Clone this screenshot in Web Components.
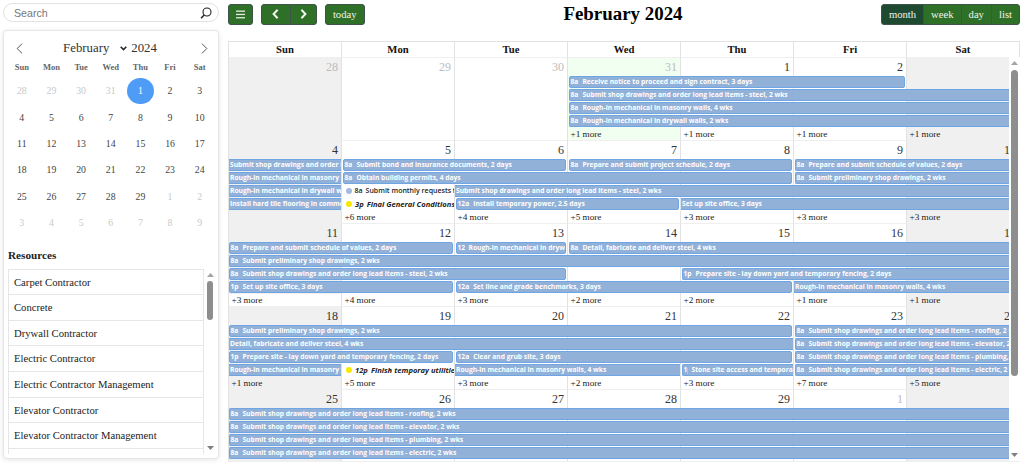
<!DOCTYPE html>
<html lang="en"><head><meta charset="utf-8"><title>February 2024</title>
<style>
html,body{margin:0;padding:0;height:465px;overflow:hidden;background:#fff;font-family:"Liberation Serif",serif;color:#222}
</style></head><body>
<app-layout>
  <side-bar slot="side">
    <search-box></search-box>
    <side-card>
      <mini-cal></mini-cal>
      <resource-list></resource-list>
    </side-card>
  </side-bar>
  <main-pane slot="main">
    <cal-toolbar title-text="February 2024"></cal-toolbar>
    <month-view></month-view>
  </main-pane>
</app-layout>
<script>
class Base extends HTMLElement{
  constructor(){super();this.attachShadow({mode:'open'});}
}
customElements.define('fake-scrollbar',class extends Base{
  connectedCallback(){
    const w=this.getAttribute('thumb-width'),t=this.getAttribute('thumb-top'),h=this.getAttribute('thumb-height');
    this.shadowRoot.innerHTML=`<style>
    :host{display:flex;flex-direction:column;align-items:center;position:absolute;top:0;right:0;bottom:0;width:${this.getAttribute('bar-width')}px;background:#fff;z-index:5}
    .a{flex:none;height:12px;display:flex;align-items:center;justify-content:center}
    .tr{flex:1;width:100%;display:flex;justify-content:center;align-items:flex-start}
    .th{width:${w}px;height:${h}px;margin-top:${t}px;border-radius:3.5px;background:#8e8e8e}
    svg{display:block}
    </style>
    <div class="a"><svg width="7" height="4"><path d="M3.5 0L7 4H0z" fill="#a4a4a4"/></svg></div>
    <div class="tr"><div class="th"></div></div>
    <div class="a"><svg width="7" height="4"><path d="M0 0H7L3.5 4z" fill="#808080"/></svg></div>`;
  }
});
customElements.define('app-layout',class extends Base{
  connectedCallback(){this.shadowRoot.innerHTML=`<style>
  :host{display:flex;height:465px;width:1024px;overflow:hidden}
  </style><slot name="side"></slot><slot name="main"></slot>`;}
});
customElements.define('side-bar',class extends Base{
  connectedCallback(){this.shadowRoot.innerHTML=`<style>
  :host{display:flex;flex-direction:column;flex:0 0 228px;width:228px;min-width:0;box-sizing:border-box;padding:3px 9px 0 3px;gap:8px}
  </style><slot></slot>`;}
});
customElements.define('search-box',class extends Base{
  connectedCallback(){this.shadowRoot.innerHTML=`<style>
  :host{display:flex;align-items:center;justify-content:space-between;height:19px;box-sizing:border-box;border:1px solid #e2e2e2;border-radius:10px;padding:0 6px 0 10px;font:10.67px "Liberation Sans",sans-serif;color:#777}
  svg{display:block}
  </style><span>Search</span>
  <svg width="12" height="12" viewBox="0 0 12 12" fill="none" stroke="#222" stroke-width="1.1"><circle cx="7" cy="5" r="4"/><path d="M4.2 8L1 11.2" stroke-width="1.5"/></svg>`;}
});
customElements.define('side-card',class extends Base{
  connectedCallback(){this.shadowRoot.innerHTML=`<style>
  :host{display:block;box-sizing:border-box;height:429px;border:1px solid #e6e6e6;border-radius:4px;box-shadow:0 1px 5px rgba(0,0,0,.1);padding:0 3px 0 3px;background:#fff}
  </style><slot></slot>`;}
});
customElements.define('mini-cal',class extends Base{
  connectedCallback(){
    const heads=['Sun','Mon','Tue','Wed','Thu','Fri','Sat'];
    const days=[];
    [28,29,30,31].forEach(d=>days.push([d,1]));
    for(let d=1;d<=29;d++)days.push([d,0]);
    for(let d=1;d<=9;d++)days.push([d,1]);
    this.shadowRoot.innerHTML=`<style>
    :host{display:block;font-family:"Liberation Serif",serif;color:#333}
    .hd{display:flex;align-items:center;justify-content:space-between;height:29px;padding:6px 7px 0 9px;box-sizing:border-box}
    .ttl{display:flex;align-items:center;font-size:12.8px;color:#333;margin-right:4px}
    .ttl svg{margin:0 4px 0 11px}
    .grid{display:grid;grid-template-columns:repeat(7,29.65px)}
    .w{font:bold 8.5px "Liberation Serif",serif;color:#666;text-align:center;height:9.5px;line-height:9.5px}
    .wk{margin-top:3px}
    .d{height:26.3px;display:flex;align-items:center;justify-content:center;font-size:9.8px;color:#444}
    .o{color:#c9c9c9}
    .t{position:relative;color:#fff}
    .t i{position:absolute;left:1.6px;top:0;width:26.4px;height:26.4px;border-radius:50%;background:#4f9cf6}
    .t b{position:relative;font-weight:normal}
    .first{margin-top:5.35px}
    svg{display:block}
    </style>
    <div class="hd">
      <svg width="7" height="11" viewBox="0 0 7 11" fill="none" stroke="#555" stroke-width="1"><path d="M6 .7L1.2 5.5 6 10.3"/></svg>
      <div class="ttl"><span>February</span><svg width="7" height="5" viewBox="0 0 7 5" fill="none" stroke="#222" stroke-width="1.5"><path d="M.7 .8L3.5 3.6 6.3 .8"/></svg><span>2024</span></div>
      <svg width="7" height="11" viewBox="0 0 7 11" fill="none" stroke="#555" stroke-width="1"><path d="M1 .7L5.8 5.5 1 10.3"/></svg>
    </div>
    <div class="grid wk">${heads.map(h=>`<div class="w">${h}</div>`).join('')}</div>
    <div class="grid first">${days.map(([d,o],i)=>i===4?`<div class="d t"><i></i><b>1</b></div>`:`<div class="d${o?' o':''}">${d}</div>`).join('')}</div>`;
  }
});
customElements.define('resource-list',class extends Base{
  connectedCallback(){
    const items=['Carpet Contractor','Concrete','Drywall Contractor','Electric Contractor','Electric Contractor Management','Elevator Contractor','Elevator Contractor Management','Excavation Contractor','Excavation Contractor Management','Fire Protection','Flooring Contractor','Framing Contractor','General Conditions','General Contractor','Glazing Contractor','HVAC Contractor','HVAC Contractor Management','Insulation Contractor','Landscaping','Masonry Contractor','Mechanical Contractor','Painting Contractor','Paving Contractor','Plumbing Contractor','Plumbing Contractor Management','Roofing Contractor','Site Utilities','Steel Contractor','Tile Contractor','Waterproofing'];
    this.shadowRoot.innerHTML=`<style>
    :host{display:block;font-family:"Liberation Serif",serif}
    h3{font:bold 11.2px/14px "Liberation Serif",serif;margin:12px 0 7.5px 1px;color:#222;height:14px}
    .wrap{position:relative;height:185px;width:208.5px;margin-left:.5px;overflow:hidden}
    .l{width:196.5px}
    .i{box-sizing:border-box;height:25.7px;line-height:24px;border:1px solid #e6e6e6;border-top:0;padding-left:5.5px;font-size:10.67px;color:#222;white-space:nowrap}
    .i:first-child{border-top:1px solid #e6e6e6}
    </style><h3>Resources</h3><div class="wrap"><div class="l">${items.map(t=>`<div class="i">${t}</div>`).join('')}</div>
    <fake-scrollbar bar-width="12" thumb-width="6" thumb-top="0" thumb-height="38.5"></fake-scrollbar></div>`;
  }
});
customElements.define('main-pane',class extends Base{
  connectedCallback(){this.shadowRoot.innerHTML=`<style>:host{display:block;flex:0 0 792px;width:792px}</style><slot></slot>`;}
});
customElements.define('cal-toolbar',class extends Base{
  connectedCallback(){
    const t=this.getAttribute('title-text');
    this.shadowRoot.innerHTML=`<style>
    :host{display:grid;grid-template-columns:1fr auto 1fr;align-items:center;height:41px;box-sizing:border-box;padding-bottom:16.5px;padding-top:4px;font-family:"Liberation Serif",serif}
    .l{display:flex;gap:8px}.r{display:flex;justify-content:flex-end}
    h1{font:bold 18.9px/20px "Liberation Serif",serif;margin:0 2px 0 0;color:#000}
    .g{display:flex}
    button{all:unset;box-sizing:border-box;display:flex;align-items:center;justify-content:center;height:20.5px;background:#2e7028;border:1px solid #3f5348;color:#f1f4ef;font:10.67px "Liberation Serif",serif;border-radius:0}
    .g button:first-child{border-radius:3px 0 0 3px}
    .g button:last-child{border-radius:0 3px 3px 0}
    .g button+button{margin-left:-1px}
    .solo{border-radius:3px}
    .act{background:#1d4a30}
    svg{display:block}
    </style>
    <div class="l">
      <button class="solo" style="width:25px" aria-label="menu"><svg width="9" height="9" viewBox="0 0 9 9" fill="#e6ece4"><rect y="0.5" width="9" height="1.3"/><rect y="3.8" width="9" height="1.3"/><rect y="7.1" width="9" height="1.3"/></svg></button>
      <div class="g">
        <button style="width:29.5px" aria-label="prev"><svg width="7" height="10" viewBox="0 0 7 10" fill="none" stroke="#f1f4ef" stroke-width="2"><path d="M5.6 .8L1.6 5l4 4.2"/></svg></button>
        <button style="width:27.5px" aria-label="next"><svg width="7" height="10" viewBox="0 0 7 10" fill="none" stroke="#f1f4ef" stroke-width="2"><path d="M1.4 .8L5.4 5l-4 4.2"/></svg></button>
      </div>
      <button class="solo" style="width:39.5px">today</button>
    </div>
    <h1>${t}</h1>
    <div class="r"><div class="g">
      <button class="act" style="width:43px">month</button>
      <button style="width:38.5px">week</button>
      <button style="width:31.5px">day</button>
      <button style="width:29px">list</button>
    </div></div>`;
  }
});
customElements.define('cal-event',class extends Base{
  connectedCallback(){
    const time=this.getAttribute('time')||'', clip=this.getAttribute('clip');
    const cs=this.hasAttribute('cont-start'), ce=this.hasAttribute('cont-end');
    const first=this.hasAttribute('first-col');
    this.shadowRoot.innerHTML=`<style>
    :host{display:block;box-sizing:border-box;height:12.4px;margin:0 ${ce?0:1}px 0 ${cs||first?1:2}px;background:#92b1d8;border:1px solid #6fa5e2;${cs?'border-left:0;':''}${ce?'border-right:0;':''}border-radius:${cs?0:2}px ${ce?0:2}px ${ce?0:2}px ${cs?0:2}px;color:#fff;font:bold 6.7px/10px "Open Sans",sans-serif;white-space:nowrap;overflow:hidden;padding-left:${cs?1:.5}px}
    .t{display:inline-block;vertical-align:top;margin-right:4px;${clip?`width:${clip}px;overflow:hidden;`:''}}
    </style>${time?`<span class="t">${time}</span>`:''}<slot></slot>`;
  }
});
customElements.define('cal-dot',class extends Base{
  connectedCallback(){
    const it=this.hasAttribute('italic');
    this.shadowRoot.innerHTML=`<style>
    :host{display:flex;align-items:center;height:12.4px;margin-left:5px;white-space:nowrap;overflow:hidden;color:#222;font:${it?'italic bold 7.6px':'600 7px'}/12px "Open Sans",sans-serif}
    i{flex:none;width:6px;height:6px;border-radius:50%;margin-right:${it?3:2.5}px;background:${this.getAttribute('color')}}
    .t{margin-right:3px}
    </style><i></i><span class="t">${this.getAttribute('time')}</span><slot></slot>`;
  }
});
customElements.define('cal-week',class extends Base{
  set data(w){this._w=w}
  connectedCallback(){
    const w=this._w, sr=this.shadowRoot;
    sr.innerHTML=`<style>
    :host{display:grid;grid-template-columns:repeat(7,113px);grid-template-rows:19px repeat(4,13px) 12px;width:792px;height:83px}
    .c{grid-row:1/-1;box-sizing:border-box;border-left:1px solid #e2e2e2;border-top:1.5px solid #efefef;background:#fff}
    .c.we{background:#f0f0f0}
    .c.to{background:#f1fff1}
    .n{grid-row:1;text-align:right;font-size:12px;line-height:16px;padding:1.5px 3px 0 0;color:#333;z-index:1}
    .n.o{color:#bcbcbc}
    .m{grid-row:6;font-size:9.2px;line-height:12px;padding-left:2.5px;color:#222;z-index:1;margin-left:1px;white-space:nowrap}
    .m.w{background:#fff}
    .last{border-right:1px solid #e2e2e2}
    cal-event,cal-dot{z-index:2;min-width:0}
    </style>`;
    w.n.forEach((d,i)=>{
      const c=document.createElement('div');
      c.className='c'+(i===0||i===6?' we':'')+(w.today===i?' to':'')+(i===6?' last':'');
      c.style.gridColumn=(i+1);sr.append(c);
      const n=document.createElement('div');
      n.className='n'+((w.o||[]).includes(i)?' o':'');n.style.gridColumn=(i+1);n.textContent=d;sr.append(n);
    });
    (w.more||[]).forEach(([i,v,white])=>{
      const m=document.createElement('div');
      m.className='m'+(white?' w':'');m.style.gridColumn=(i+1);m.textContent='+'+v+' more';sr.append(m);
    });
    (w.ev||[]).forEach(e=>{
      const [row,col,span,text,opt={}]=e;
      let el;
      if(opt.dot){el=document.createElement('cal-dot');el.setAttribute('color',opt.dot);el.setAttribute('time',opt.time);if(opt.italic)el.setAttribute('italic','');}
      else{
        el=document.createElement('cal-event');
        if(opt.time)el.setAttribute('time',opt.time);
        if(opt.clip)el.setAttribute('clip',opt.clip);
        if(opt.cs)el.setAttribute('cont-start','');
        if(opt.ce)el.setAttribute('cont-end','');
        if(col===0)el.setAttribute('first-col','');
      }
      el.style.gridColumn=`${col+1} / span ${span}`;
      el.style.gridRow=row+1;
      el.textContent=text;
      sr.append(el);
    });
  }
});
const A={time:'8a'};
const STEEL='Submit shop drawings and order long lead items - steel, 2 wks';
const MAS='Rough-in mechanical in masonry walls, 4 wks';
const DRY='Rough-in mechanical in drywall walls, 2 wks';
const WEEKS=[
{n:[28,29,30,31,1,2,3],o:[0,1,2,3],today:3,more:[[3,1],[4,1],[5,1],[6,1]],ev:[
 [1,3,3,'Receive notice to proceed and sign contract, 3 days',A],
 [2,3,4,STEEL,{time:'8a',ce:1}],
 [3,3,4,MAS,{time:'8a',ce:1}],
 [4,3,4,DRY,{time:'8a',ce:1}]]},
{n:[4,5,6,7,8,9,10],more:[[1,6],[2,4],[3,5],[4,3],[5,3],[6,3]],ev:[
 [1,0,1,STEEL,{cs:1,ce:1}],
 [1,1,2,'Submit bond and insurance documents, 2 days',A],
 [1,3,2,'Prepare and submit project schedule, 2 days',A],
 [1,5,2,'Prepare and submit schedule of values, 2 days',{time:'8a',ce:1}],
 [2,0,1,MAS,{cs:1,ce:1}],
 [2,1,4,'Obtain building permits, 4 days',A],
 [2,5,2,'Submit preliminary shop drawings, 2 wks',{time:'8a',ce:1}],
 [3,0,1,DRY,{cs:1,ce:1}],
 [3,1,1,'Submit monthly requests for payment',{dot:'#a4bbdf',time:'8a'}],
 [3,2,5,STEEL,{cs:1,ce:1}],
 [4,0,1,'Install hard tile flooring in common areas, 2 wks',{cs:1,ce:1}],
 [4,1,1,'Final General Conditions',{dot:'#f7ea00',time:'3p',italic:1}],
 [4,2,2,'Install temporary power, 2.5 days',{time:'12a'}],
 [4,4,3,'Set up site office, 3 days',{cs:1,ce:1}]]},
{n:[11,12,13,14,15,16,17],more:[[0,3,1],[1,4],[2,3],[3,2],[4,2],[5,1],[6,1]],ev:[
 [1,0,2,'Prepare and submit schedule of values, 2 days',A],
 [1,2,1,'Rough-in mechanical in drywall walls, 2 wks',{time:'12a',clip:'7'}],
 [1,3,4,'Detail, fabricate and deliver steel, 4 wks',{time:'8a',ce:1}],
 [2,0,7,'Submit preliminary shop drawings, 2 wks',{time:'8a',ce:1}],
 [3,0,3,STEEL,A],
 [3,4,3,'Prepare site - lay down yard and temporary fencing, 2 days',{time:'1p',ce:1}],
 [4,0,2,'Set up site office, 3 days',{time:'1p'}],
 [4,2,3,'Set line and grade benchmarks, 3 days',{time:'12a'}],
 [4,5,2,MAS,{cs:1,ce:1}]]},
{n:[18,19,20,21,22,23,24],more:[[0,1],[1,5],[2,3],[3,2],[4,3],[5,7],[6,5]],ev:[
 [1,0,5,'Submit preliminary shop drawings, 2 wks',A],
 [1,5,2,'Submit shop drawings and order long lead items - roofing, 2 wks',{time:'8a',ce:1}],
 [2,0,5,'Detail, fabricate and deliver steel, 4 wks',{cs:1,ce:1}],
 [2,5,2,'Submit shop drawings and order long lead items - elevator, 2 wks',{time:'8a',ce:1}],
 [3,0,2,'Prepare site - lay down yard and temporary fencing, 2 days',{time:'1p'}],
 [3,2,3,'Clear and grub site, 3 days',{time:'12a'}],
 [3,5,2,'Submit shop drawings and order long lead items - plumbing, 2 wks',{time:'8a',ce:1}],
 [4,0,1,MAS,{cs:1,ce:1}],
 [4,1,1,'Finish temporay utilities',{dot:'#f7ea00',time:'12p',italic:1}],
 [4,2,2,MAS,{cs:1,ce:1}],
 [4,4,1,'Stone site access and temporary parking, 3 days',{time:'1p',clip:'4',ce:1}],
 [4,5,2,'Submit shop drawings and order long lead items - electric, 2 wks',{time:'8a',ce:1}]]},
{n:[25,26,27,28,29,1,2],o:[5,6],ev:[
 [1,0,7,'Submit shop drawings and order long lead items - roofing, 2 wks',{time:'8a',ce:1}],
 [2,0,7,'Submit shop drawings and order long lead items - elevator, 2 wks',{time:'8a',ce:1}],
 [3,0,7,'Submit shop drawings and order long lead items - plumbing, 2 wks',{time:'8a',ce:1}],
 [4,0,7,'Submit shop drawings and order long lead items - electric, 2 wks',{time:'8a',ce:1}]]},
{n:[3,4,5,6,7,8,9],o:[0,1,2,3,4,5,6]}
];
customElements.define('month-view',class extends Base{
  connectedCallback(){
    const sr=this.shadowRoot;
    sr.innerHTML=`<style>
    :host{display:block;width:792px;font-family:"Liberation Serif",serif}
    .h{display:grid;grid-template-columns:repeat(7,113px);width:792px;height:16px;box-sizing:border-box;border-top:1px solid #e2e2e2;border-right:1px solid #e2e2e2}
    .h div{border-left:1px solid #e2e2e2;font:bold 10.67px/15px "Liberation Serif",serif;text-align:center;color:#111}
    .b{position:relative;height:404px;width:792px;overflow:hidden;border-bottom:1px solid #eee;box-sizing:content-box}
    </style>
    <div class="h">${['Sun','Mon','Tue','Wed','Thu','Fri','Sat'].map(d=>`<div>${d}</div>`).join('')}</div>
    <div class="b"><div class="in"></div><fake-scrollbar bar-width="11" thumb-width="7" thumb-top="0.5" thumb-height="306.5"></fake-scrollbar></div>`;
    const inn=sr.querySelector('.in');
    WEEKS.forEach(w=>{const e=document.createElement('cal-week');e.data=w;inn.append(e);});
  }
});
</script>
</body></html>
